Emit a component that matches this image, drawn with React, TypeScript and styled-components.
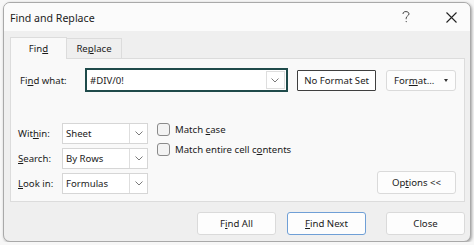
import React from "react";
import styled, { createGlobalStyle, css } from "styled-components";

const GlobalStyle = createGlobalStyle`
  html, body {
    margin: 0;
    padding: 0;
    background: #f7f7f7;
  }
  body {
    font-family: "Noto Sans", "Open Sans", "Liberation Sans", sans-serif;
    font-size: 9.6px;
    color: #1b1b1b;
  }
`;

const Window = styled.div`
  box-sizing: border-box;
  margin: 2px 0 0 3px;
  width: 468px;
  height: 240px;
  border: 1px solid #a9a9a9;
  border-radius: 7px;
  background: #efefef;
  box-shadow: 1px 1px 3px rgba(0, 0, 0, 0.35);
  overflow: hidden;
  display: flex;
  flex-direction: column;
`;

const TitleBar = styled.div`
  height: 28px;
  flex: none;
  background: #fbfbfb;
  display: flex;
  align-items: center;
  padding: 0 0 0 6px;
`;

const Title = styled.span`
  flex: 1;
  font-size: 10.6px;
  padding-top: 1px;
`;

const TitleButton = styled.span<{ $width: number }>`
  width: ${p => p.$width}px;
  height: 28px;
  display: flex;
  align-items: center;
  justify-content: center;
`;

const Body = styled.div`
  flex: 1;
  display: flex;
  flex-direction: column;
  padding: 6px 5px 0 6px;
`;

const Tabs = styled.div`
  display: flex;
  align-items: flex-end;
  height: 21px;
  position: relative;
  z-index: 1;
`;

const Tab = styled.div<{ $active?: boolean }>`
  box-sizing: border-box;
  display: flex;
  align-items: center;
  justify-content: center;
  border: 1px solid #dcdcdc;
  border-bottom: none;
  ${p =>
    p.$active
      ? css`
          width: 57px;
          height: 22px;
          background: #f9f9f9;
          margin-bottom: -1px;
        `
      : css`
          width: 55px;
          height: 20px;
          background: #efefef;
          border-left: none;
        `}
`;

const Panel = styled.div`
  box-sizing: border-box;
  height: 144px;
  background: #f9f9f9;
  border: 1px solid #dcdcdc;
  padding: 9px 8px 0 9px;
  display: flex;
  flex-direction: column;
`;

const FindRow = styled.div`
  display: flex;
  align-items: center;
  height: 24px;
`;

const Label = styled.span<{ $width: number }>`
  width: ${p => p.$width}px;
  flex: none;
  white-space: nowrap;
`;

const Combo = styled.div<{ $width: number; $focused?: boolean }>`
  box-sizing: border-box;
  width: ${p => p.$width}px;
  display: flex;
  align-items: stretch;
  background: #fff;
  ${p =>
    p.$focused
      ? css`
          height: 24px;
          border: 2px solid #1f4b4b;
        `
      : css`
          height: 21px;
          border: 1px solid #d6d6d6;
        `}
`;

const ComboText = styled.span`
  flex: 1;
  display: flex;
  align-items: center;
  padding-left: 3px;
`;

const ComboArrow = styled.span<{ $boxed?: boolean }>`
  width: 17px;
  display: flex;
  align-items: center;
  justify-content: center;
  ${p =>
    p.$boxed
      ? css`
          margin: 1px;
          border: 1px solid #dedede;
        `
      : css`
          border-left: 1px solid #dedede;
        `}
`;

const Button = styled.button<{ $width: number; $variant?: "dark" | "primary" | "slim" }>`
  box-sizing: border-box;
  width: ${p => p.$width}px;
  height: 23px;
  font: inherit;
  color: inherit;
  padding: 0;
  white-space: nowrap;
  background: #fdfdfd;
  border: 1px solid #dadada;
  border-radius: 3px;
  display: flex;
  align-items: center;
  justify-content: center;
  ${p =>
    p.$variant === "dark" &&
    css`
      height: 21px;
      border-color: #3f3f3f;
      border-radius: 1px;
      background: #fff;
    `}
  ${p =>
    p.$variant === "slim" &&
    css`
      height: 21px;
    `}
  ${p =>
    p.$variant === "primary" &&
    css`
      border-color: #6f9fd6;
    `}
`;

const Spacer = styled.span<{ $width: number }>`
  width: ${p => p.$width}px;
  flex: none;
`;

const Options = styled.div`
  display: flex;
  margin-top: 31px;
`;

const Selects = styled.div`
  display: flex;
  flex-direction: column;
  gap: 4px;
  margin-left: -2px;
`;

const SelectRow = styled.div`
  display: flex;
  align-items: center;
`;

const Checks = styled.div`
  display: flex;
  flex-direction: column;
  gap: 7px;
  margin-left: 9px;
`;

const CheckRow = styled.label`
  display: flex;
  align-items: center;
  gap: 5px;
`;

const Box = styled.span`
  box-sizing: border-box;
  width: 13px;
  height: 13px;
  border: 1px solid #8a8a8a;
  border-radius: 3px;
  background: #f3f3f3;
`;

const OptionsButtonWrap = styled.div`
  margin-left: auto;
  align-self: flex-end;
`;

const Footer = styled.div`
  display: flex;
  justify-content: flex-end;
  gap: 11px;
  padding-top: 10px;
`;

const Chevron = () => (
  <svg width="8" height="5" viewBox="0 0 8 5">
    <polyline points="0.5,0.5 4,4 7.5,0.5" fill="none" stroke="#7a7a7a" strokeWidth="1" />
  </svg>
);

const DropTriangle = styled.span`
  width: 0;
  height: 0;
  margin-left: 10px;
  border-left: 2px solid transparent;
  border-right: 2px solid transparent;
  border-top: 3px solid #333;
`;

const selects = [
  { label: <>Wit<u>h</u>in:</>, value: "Sheet" },
  { label: <><u>S</u>earch:</>, value: "By Rows" },
  { label: <><u>L</u>ook in:</>, value: "Formulas" },
];

export default function App() {
  return (
    <>
      <GlobalStyle />
      <Window>
        <TitleBar>
          <Title>Find and Replace</Title>
          <TitleButton $width={52}>
            <svg width="8" height="12" viewBox="0 0 8 12">
              <path d="M1 3 C1 1 2.3 0.6 4 0.6 C5.8 0.6 7 1.6 7 3 C7 4.6 4.2 5 4.2 7.2 L4.2 8.2" fill="none" stroke="#333" strokeWidth="0.9" />
              <circle cx="4.2" cy="10.6" r="0.6" fill="#333" />
            </svg>
          </TitleButton>
          <TitleButton $width={38}>
            <svg width="11" height="11" viewBox="0 0 11 11">
              <path d="M0.5 0.5 L10.5 10.5 M10.5 0.5 L0.5 10.5" stroke="#222" strokeWidth="1.1" />
            </svg>
          </TitleButton>
        </TitleBar>
        <Body>
          <Tabs>
            <Tab $active>Fin<u>d</u></Tab>
            <Tab>Re<u>p</u>lace</Tab>
          </Tabs>
          <Panel>
            <FindRow>
              <Label $width={65}>Fi<u>n</u>d what:</Label>
              <Combo $width={204} $focused>
                <ComboText>#DIV/0!</ComboText>
                <ComboArrow $boxed>
                  <Chevron />
                </ComboArrow>
              </Combo>
              <Spacer $width={9} />
              <Button $width={80} $variant="dark">No Format Set</Button>
              <Spacer $width={10} />
              <Button $width={70} $variant="slim">
                For<u>m</u>at...
                <DropTriangle />
              </Button>
            </FindRow>
            <Options>
              <Selects>
                {selects.map(s => (
                  <SelectRow key={s.value}>
                    <Label $width={44}>{s.label}</Label>
                    <Combo $width={86}>
                      <ComboText>{s.value}</ComboText>
                      <ComboArrow>
                        <Chevron />
                      </ComboArrow>
                    </Combo>
                  </SelectRow>
                ))}
              </Selects>
              <Checks>
                <CheckRow>
                  <Box />
                  <span>
                    Match <u>c</u>ase
                  </span>
                </CheckRow>
                <CheckRow>
                  <Box />
                  <span>
                    Match entire cell c<u>o</u>ntents
                  </span>
                </CheckRow>
              </Checks>
              <OptionsButtonWrap>
                <Button $width={79}>
                  Op<u>t</u>ions &lt;&lt;
                </Button>
              </OptionsButtonWrap>
            </Options>
          </Panel>
          <Footer>
            <Button $width={79}>
              F<u>i</u>nd All
            </Button>
            <Button $width={79} $variant="primary">
              <u>F</u>ind Next
            </Button>
            <Button $width={79} style={{ marginLeft: 9 }}>
              Close
            </Button>
          </Footer>
        </Body>
      </Window>
    </>
  );
}
